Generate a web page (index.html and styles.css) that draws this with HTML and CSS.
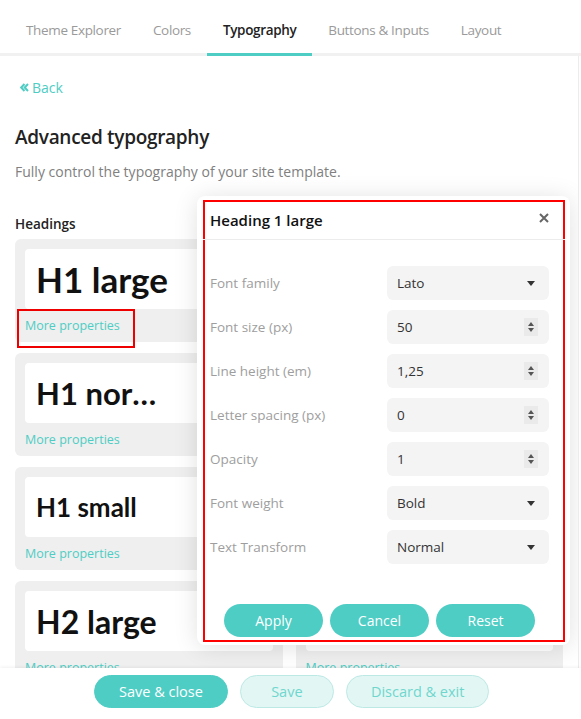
FILE: index.html
```html
<!DOCTYPE html>
<html lang="en">
<head>
  <meta charset="UTF-8" />
  <meta name="viewport" content="width=device-width, initial-scale=1.0"/>
  <title>Typography</title>
  <link rel="stylesheet" href="styles.css">
</head>
<body>
  <nav class="tabs">
    <a class="tab">Theme Explorer</a>
    <a class="tab">Colors</a>
    <a class="tab active">Typography</a>
    <a class="tab">Buttons &amp; Inputs</a>
    <a class="tab">Layout</a>
  </nav>

  <main class="content">
    <a class="back">
      <svg width="9" height="9" viewBox="0 0 9 9"><path d="M4.5 1 1.2 4.5 4.5 8M8 1 4.7 4.5 8 8" fill="none" stroke="currentColor" stroke-width="2"/></svg>
      Back
    </a>
    <h1 class="title">Advanced typography</h1>
    <p class="intro">Fully control the typography of your site template.</p>
    <h2 class="section">Headings</h2>

    <div class="cards">
      <div class="card">
        <div class="preview"><span class="sample h1l">H1 large</span></div>
        <a class="more marked">More properties</a>
      </div>
      <div class="card">
        <div class="preview"><span class="sample h1l">H1 large</span></div>
        <a class="more">More properties</a>
      </div>
      <div class="card">
        <div class="preview"><span class="sample h1n">H1 normal</span></div>
        <a class="more">More properties</a>
      </div>
      <div class="card">
        <div class="preview"><span class="sample h1n">H1 normal</span></div>
        <a class="more">More properties</a>
      </div>
      <div class="card">
        <div class="preview"><span class="sample h1s">H1 small</span></div>
        <a class="more">More properties</a>
      </div>
      <div class="card">
        <div class="preview"><span class="sample h1s">H1 small</span></div>
        <a class="more">More properties</a>
      </div>
      <div class="card">
        <div class="preview"><span class="sample h2l">H2 large</span></div>
        <a class="more">More properties</a>
      </div>
      <div class="card">
        <div class="preview"><span class="sample h2l">H2 large</span></div>
        <a class="more">More properties</a>
      </div>
    </div>

    <div class="popup">
      <div class="popup-frame">
        <div class="popup-head">
          <span>Heading 1 large</span>
          <svg class="close" width="10" height="10" viewBox="0 0 10 10"><path d="M1 1 9 9M9 1 1 9" stroke="currentColor" stroke-width="2"/></svg>
        </div>
        <div class="popup-body">
          <div class="row"><label>Font family</label><div class="field">Lato<i class="caret"></i></div></div>
          <div class="row"><label>Font size (px)</label><div class="field">50<i class="spin"></i></div></div>
          <div class="row"><label>Line height (em)</label><div class="field">1,25<i class="spin"></i></div></div>
          <div class="row"><label>Letter spacing (px)</label><div class="field">0<i class="spin"></i></div></div>
          <div class="row"><label>Opacity</label><div class="field">1<i class="spin"></i></div></div>
          <div class="row"><label>Font weight</label><div class="field">Bold<i class="caret"></i></div></div>
          <div class="row"><label>Text Transform</label><div class="field">Normal<i class="caret"></i></div></div>
        </div>
        <div class="popup-actions">
          <button class="pill">Apply</button>
          <button class="pill">Cancel</button>
          <button class="pill">Reset</button>
        </div>
      </div>
    </div>
  </main>

  <footer class="footer">
    <button class="btn primary">Save &amp; close</button>
    <button class="btn light save">Save</button>
    <button class="btn light">Discard &amp; exit</button>
  </footer>
</body>
</html>
```

FILE: styles.css
```css
* {
  box-sizing: border-box;
}
body {
  margin: 0;
  height: 719px;
  display: flex;
  flex-direction: column;
  font-family: "Open Sans", "Noto Sans", sans-serif;
  color: #222;
  background: #fff;
  overflow: hidden;
}
.tabs {
  display: flex;
  height: 56px;
  padding: 7px 0 0 10px;
  border-bottom: 3px solid #f1f1f1;
  flex-shrink: 0;
}
.tab {
  display: flex;
  align-items: center;
  padding: 0 16px;
  margin-bottom: -3px;
  border-bottom: 3px solid transparent;
  font-size: 13.5px;
  color: #9a9a9a;
  letter-spacing: -0.35px;
}
.tab.active {
  color: #222;
  font-weight: 600;
  border-bottom-color: #4ecdc4;
}
.content {
  flex: 1;
  position: relative;
  overflow: hidden;
  padding: 0 15px;
  border-right: 1px solid #ececec;
  margin-right: 2px;
}
.back {
  display: flex;
  align-items: center;
  gap: 3px;
  margin: 22px 0 0 5px;
  font-size: 14px;
  color: #4ecdc4;
}
.title {
  margin: 27px 0 0;
  font-size: 19px;
  font-weight: 600;
  letter-spacing: -0.3px;
  color: #222;
}
.intro {
  margin: 12px 0 0;
  font-size: 14px;
  color: #808080;
}
.section {
  margin: 34px 0 0;
  font-size: 13.5px;
  font-weight: 600;
}
.cards {
  display: grid;
  grid-template-columns: 1fr 1fr;
  column-gap: 13px;
  row-gap: 11px;
  margin-top: 6px;
}
.card {
  background: #efefef;
  border-radius: 6px;
  padding: 10px 10px 0;
}
.preview {
  height: 60px;
  background: #fff;
  border-radius: 4px;
  display: flex;
  align-items: center;
  padding-left: 11px;
}
.sample {
  font-family: Lato, sans-serif;
  font-weight: 700;
  color: #111;
  white-space: nowrap;
  overflow: hidden;
  text-overflow: ellipsis;
  max-width: 140px;
}
.h1l { font-size: 35px; }
.h1n { font-size: 31px; }
.h1s { font-size: 26px; }
.h2l { font-size: 32px; }
.more {
  display: block;
  padding: 8px 0;
  line-height: 17px;
  font-size: 12.5px;
  color: #4ecdc4;
}
.more.marked {
  position: relative;
}
.more.marked::after {
  content: "";
  position: absolute;
  left: -8px;
  top: 0;
  width: 114px;
  height: 35px;
  border: 2px solid #e00;
}
.popup {
  position: absolute;
  left: 197px;
  top: 140px;
  width: 373px;
  height: 449px;
  background: #fff;
  border-radius: 8px;
  box-shadow: 0 2px 24px rgba(0, 0, 0, 0.12);
  padding: 4px 5px 3px 6px;
}
.popup-frame {
  height: 100%;
  border: 2px solid #f00;
  display: flex;
  flex-direction: column;
}
.popup-head {
  height: 38px;
  display: flex;
  align-items: center;
  justify-content: space-between;
  padding: 0 16px 2px 7px;
  border-bottom: 1px solid #ececec;
  font-size: 15px;
  font-weight: 600;
  color: #111;
  margin: 0 -2px;
}
.close {
  color: #666;
  margin-top: -4px;
}
.popup-body {
  padding: 26px 14px 0 5px;
  display: flex;
  flex-direction: column;
  gap: 10px;
}
.row {
  display: flex;
  align-items: center;
  justify-content: space-between;
}
.row label {
  font-size: 13.5px;
  color: #9e9e9e;
}
.field {
  width: 162px;
  height: 34px;
  background: #f4f4f4;
  border-radius: 6px;
  display: flex;
  align-items: center;
  justify-content: space-between;
  padding: 0 11px 0 10px;
  font-size: 13.5px;
  color: #333;
}
.caret {
  width: 0;
  height: 0;
  border-left: 4px solid transparent;
  border-right: 4px solid transparent;
  border-top: 5px solid #333;
  margin-right: 3px;
}
.spin {
  width: 14px;
  height: 18px;
  background: #eaeaea;
  position: relative;
}
.spin::before,
.spin::after {
  content: "";
  position: absolute;
  left: 4px;
  border-left: 3px solid transparent;
  border-right: 3px solid transparent;
}
.spin::before {
  top: 4px;
  border-bottom: 4px solid #555;
}
.spin::after {
  bottom: 4px;
  border-top: 4px solid #555;
}
.popup-actions {
  margin-top: auto;
  display: flex;
  gap: 7px;
  padding: 0 0 3px 19px;
}
.pill {
  width: 99px;
  height: 33px;
  border: none;
  border-radius: 17px;
  background: #4ecdc4;
  color: #fff;
  font-family: inherit;
  font-size: 14px;
}
.footer {
  height: 51px;
  flex-shrink: 0;
  display: flex;
  align-items: center;
  gap: 12px;
  padding: 0 0 4px 94px;
  background: #fff;
  box-shadow: 0 -1px 3px rgba(0, 0, 0, 0.06);
  position: relative;
}
.btn {
  height: 33px;
  padding: 0 24px;
  border-radius: 17px;
  font-family: inherit;
  font-size: 14.5px;
}
.primary {
  background: #4ecdc4;
  border: 1px solid #4ecdc4;
  color: #fff;
}
.light {
  background: #e2f6f4;
  border: 1px solid #bde9e5;
  color: #6fd6ce;
}
.save {
  width: 94px;
}
```
